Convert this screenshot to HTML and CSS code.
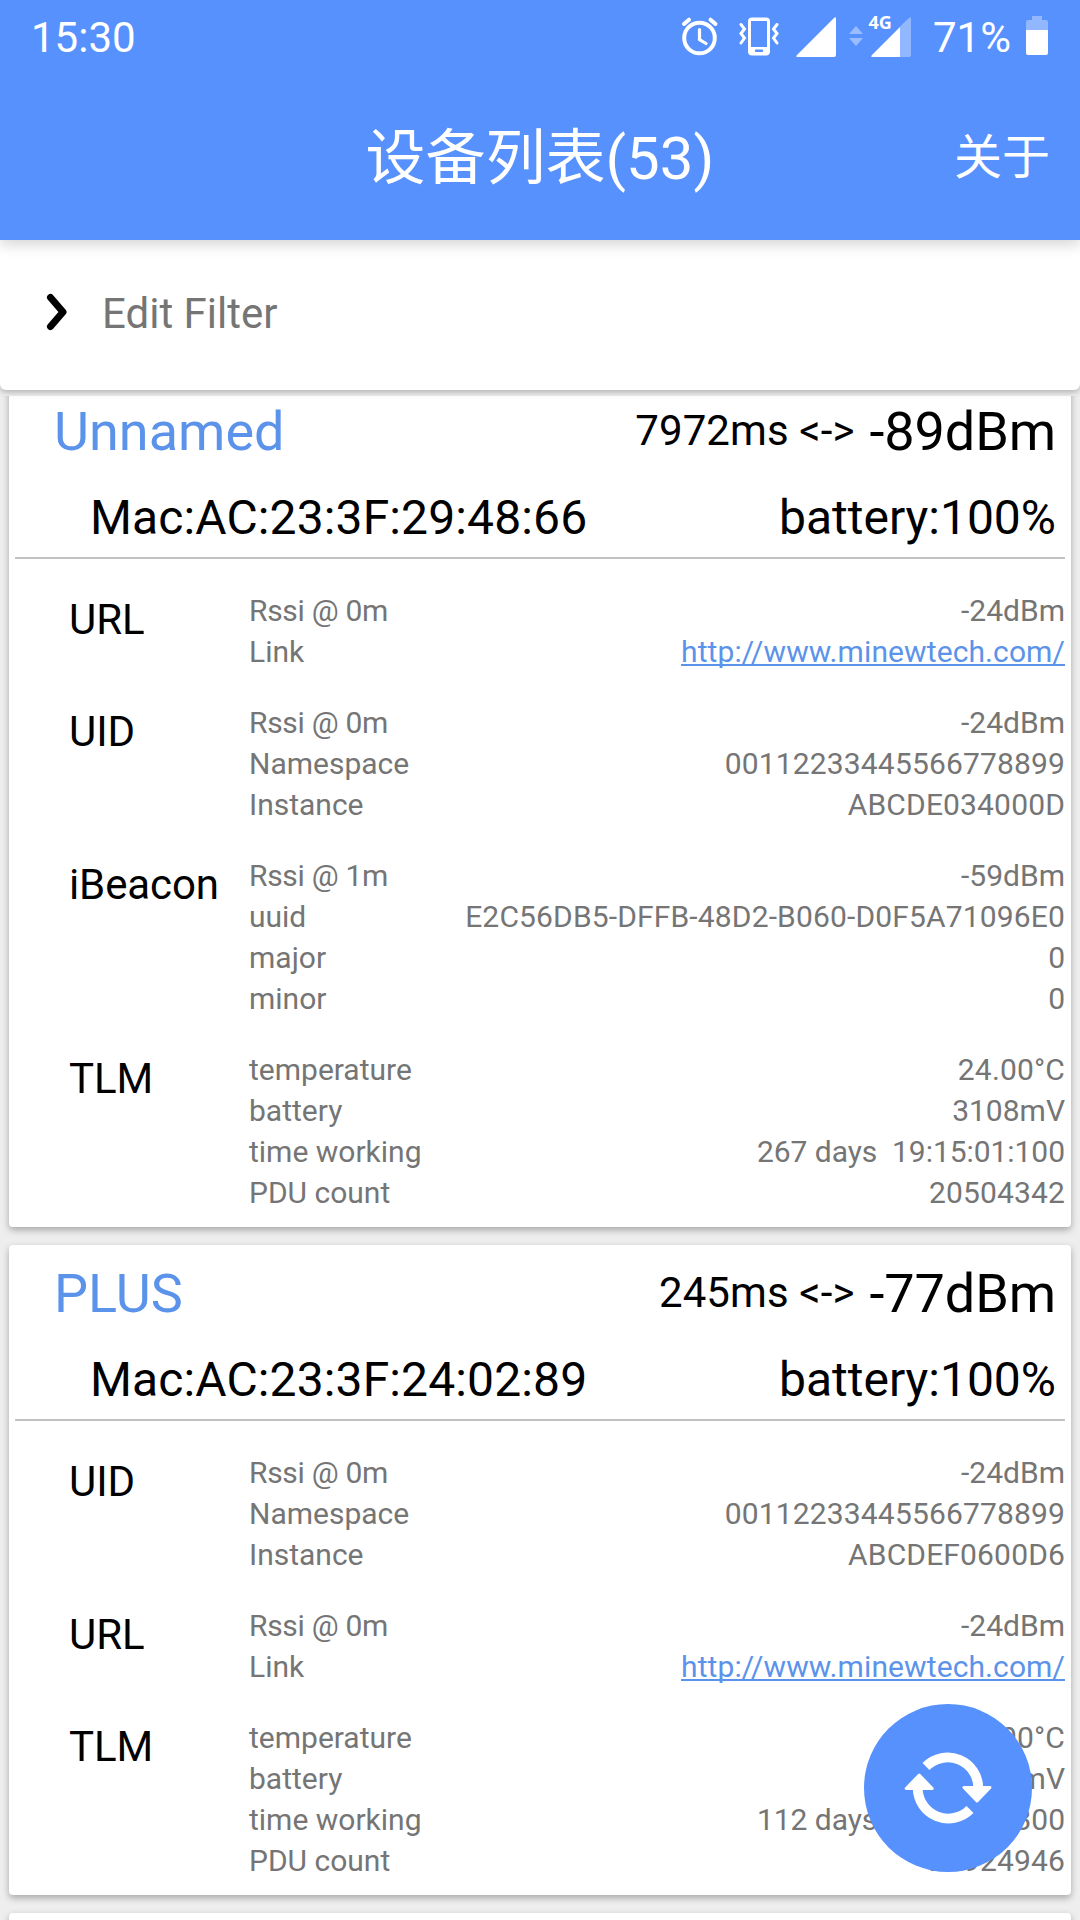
FILE: index.html
```html
<!DOCTYPE html>
<html lang="zh-CN">
<head>
<meta charset="utf-8">
<title>设备列表</title>
<link rel="stylesheet" href="styles.css">
</head>
<body>
<div class="screen">
  <div class="status">
    <span class="clock">15:30</span>
    <svg class="status-icons" width="238" height="60" viewBox="676 0 238 60">
      <g fill="none" stroke="#fff" stroke-width="4" stroke-linecap="round">
        <circle cx="699.500" cy="38" r="15.300"/>
        <path d="M699.5 29.5v10l6.5 4" stroke-width="3.2"/>
        <path d="M684 24l5-4.300M715.500 24l-5-4.300"/>
        <path d="M741 24.500l3.500 4.500-3.500 4.500 3.500 4.500-3.500 5M777 24.500l-3.500 4.500 3.500 4.500-3.500 4.500 3.500 5" stroke-width="3"/>
      </g>
      <path fill="#fff" fill-rule="evenodd" d="M752 17.500h14q4 0 4 4v30q0 4-4 4h-14q-4 0-4-4v-30q0-4 4-4zM751 21v26h16v-26zM756 49.500q-1.200 0-1.200 1.300t1.200 1.300h6q1.200 0 1.200-1.300t-1.200-1.300z"/>
      <path fill="#fff" d="M834 18q2-2 2 1v36q0 2-2 2h-36q-3 0-1-2z"/>
      <path fill="#fff" opacity=".4" d="M849 34l7-8 7 8zM849 38h14l-7 8z"/>
      <path fill="#fff" opacity=".35" d="M900 26.500l9-8.500q2-2 2 1v36q0 2-2 2h-9z"/>
      <path fill="#fff" d="M900 27v30h-27q-3 0-1-2z"/>
      <text class="net" x="868.500" y="29">4G</text>
    </svg>
    <span class="percent">71%</span>
    <svg class="battery" width="22" height="40" viewBox="0 0 22 40">
      <path fill="#fff" opacity=".35" d="M6 0h10v4h4q2 0 2 2v8H0V6q0-2 2-2h4z"/>
      <path fill="#fff" d="M0 14h22v23q0 2-2 2H2q-2 0-2-2z"/>
    </svg>
  </div>
  <header class="appbar">
    <h1 class="title">设备列表(53)</h1>
    <a class="about">关于</a>
  </header>
  <div class="filter">
    <svg width="24" height="40" viewBox="0 0 24 40"><path d="M5.500 5.500L18 20 5.500 34.500" fill="none" stroke="#000" stroke-width="7" stroke-linecap="round" stroke-linejoin="round"/></svg>
    <span>Edit Filter</span>
  </div>
  <main class="list">
    <section class="card">
      <div class="head"><span class="name">Unnamed</span><span class="interval">7972ms &lt;-&gt;</span><span class="rssi">-89dBm</span></div>
      <div class="sub"><span class="mac">Mac:AC:23:3F:29:48:66</span><span>battery:100%</span></div>
      <div class="frames">
        <div class="frame"><h2>URL</h2><dl><dt class="tight">Rssi @ 0m</dt><dd>-24dBm</dd><dt>Link</dt><dd><a class="link">http://www.minewtech.com/</a></dd></dl></div>
        <div class="frame"><h2>UID</h2><dl><dt class="tight">Rssi @ 0m</dt><dd>-24dBm</dd><dt>Namespace</dt><dd class="id">00112233445566778899</dd><dt>Instance</dt><dd class="id">ABCDE034000D</dd></dl></div>
        <div class="frame"><h2>iBeacon</h2><dl><dt class="tight">Rssi @ 1m</dt><dd>-59dBm</dd><dt>uuid</dt><dd class="id">E2C56DB5-DFFB-48D2-B060-D0F5A71096E0</dd><dt>major</dt><dd>0</dd><dt>minor</dt><dd>0</dd></dl></div>
        <div class="frame"><h2>TLM</h2><dl><dt>temperature</dt><dd class="id">24.00°C</dd><dt>battery</dt><dd>3108mV</dd><dt>time working</dt><dd class="uptime">267 days  19:15:01:100</dd><dt>PDU count</dt><dd class="id">20504342</dd></dl></div>
      </div>
    </section>
    <section class="card">
      <div class="head"><span class="name">PLUS</span><span class="interval">245ms &lt;-&gt;</span><span class="rssi">-77dBm</span></div>
      <div class="sub"><span class="mac">Mac:AC:23:3F:24:02:89</span><span>battery:100%</span></div>
      <div class="frames">
        <div class="frame"><h2>UID</h2><dl><dt class="tight">Rssi @ 0m</dt><dd>-24dBm</dd><dt>Namespace</dt><dd class="id">00112233445566778899</dd><dt>Instance</dt><dd class="id">ABCDEF0600D6</dd></dl></div>
        <div class="frame"><h2>URL</h2><dl><dt class="tight">Rssi @ 0m</dt><dd>-24dBm</dd><dt>Link</dt><dd><a class="link">http://www.minewtech.com/</a></dd></dl></div>
        <div class="frame"><h2>TLM</h2><dl><dt>temperature</dt><dd class="id">24.00°C</dd><dt>battery</dt><dd>3108mV</dd><dt>time working</dt><dd class="uptime">112 days  19:15:01:300</dd><dt>PDU count</dt><dd class="id">22924946</dd></dl></div>
      </div>
    </section>
    <section class="card"></section>
  </main>
  <button class="fab" aria-label="刷新">
    <svg width="168" height="168" viewBox="0 0 168 168">
      <g fill="none" stroke="#fff" stroke-width="9.800">
        <path d="M62 62.500A30.600 30.600 0 0 1 114.300 84"/>
        <path d="M106 105.500A30.600 30.600 0 0 1 53.700 84"/>
      </g>
      <path fill="#fff" stroke="#fff" stroke-width="3" stroke-linejoin="round" d="M100 83.500h26l-13 13.500zM42.200 84.500h26l-13-13.500z"/>
    </svg>
  </button>
</div>
</body>
</html>
```
FILE: styles.css
```css
* { box-sizing: border-box; }
body { margin: 0; font-family: Roboto, "Noto Sans CJK SC", sans-serif; color: #000; }
h1, h2, dl, dd { margin: 0; font-weight: 400; }
.screen { position: relative; display: flex; flex-direction: column; width: 1080px; height: 1920px; overflow: hidden; background: #eee; }

.status { flex: none; display: flex; align-items: flex-start; height: 72px; padding: 0 32px 0 31px; background: #5791fe; color: #fff; font-size: 42px; line-height: 75px; z-index: 3; }
.clock { flex: 1; }
.net { font: 700 18px "Noto Sans", sans-serif; fill: #fff; }
.percent { margin-left: 19px; width: 93px; }
.battery { margin-top: 16px; }

.appbar { flex: none; display: grid; grid-template-columns: 1fr auto 1fr; height: 168px; padding: 0 30px; background: #5791fe; color: #fff; z-index: 2; box-shadow: 0 4px 14px rgba(0, 0, 0, .18); }
.title { grid-column: 2; font-size: 60px; line-height: 173px; }
.about { font-size: 48px; line-height: 171px; text-align: right; }

.filter { flex: none; display: flex; align-items: center; gap: 33px; height: 150px; padding: 0 45px; background: #fff; border-radius: 0 0 6px 6px; box-shadow: 0 2px 6px rgba(0, 0, 0, .28); color: #757575; font-size: 42px; line-height: 49px; z-index: 1; }
.filter svg { margin-top: -6px; }
.filter span { margin-top: -3px; }

.list { flex: 1; display: flex; flex-direction: column; gap: 18px; margin-top: 6px; padding: 0 9px; overflow: hidden; }
.card { flex: none; padding: 17px 6px 14px; min-height: 100px; background: #fff; border-radius: 4px; box-shadow: 0 3px 7px rgba(0, 0, 0, .3); }
.card:first-child { margin-top: -13px; }
.head { display: flex; align-items: baseline; height: 89px; padding: 0 9px 0 39px; font-size: 54px; line-height: 63px; }
.name { flex: 1; color: #5c93ea; }
.interval { font-size: 42px; line-height: 49px; position: relative; top: -5px; margin-right: 15px; letter-spacing: .1px; }
.rssi { letter-spacing: -.1px; }
.sub { display: flex; justify-content: space-between; height: 70px; padding: 0 9px 0 75px; font-size: 48px; line-height: 57px; border-bottom: 2px solid #c1c1c1; }
.mac { letter-spacing: .13px; }
.frames { display: flex; flex-direction: column; gap: 30px; padding-top: 31px; }
.frame { display: flex; padding-left: 54px; }
.frame h2 { width: 180px; padding-top: 5px; font-size: 42px; line-height: 49px; letter-spacing: -.1px; }
.frame dl { flex: 1; display: grid; grid-template-columns: auto 1fr; color: #757575; font-size: 30px; line-height: 41px; }
.frame .tight { letter-spacing: -.3px; }
.frame dd { text-align: right; white-space: pre; }
.frame .id { letter-spacing: .15px; }
.frame .uptime { letter-spacing: -.05px; }
.link { color: #5c93ea; letter-spacing: .1px; text-decoration: underline; text-decoration-thickness: 2px; text-underline-offset: 2px; text-decoration-skip-ink: none; }

.fab { position: absolute; left: 864px; top: 1704px; width: 168px; height: 168px; padding: 0; border: 0; border-radius: 50%; background: #5791fe; }
.fab svg { display: block; }
```
